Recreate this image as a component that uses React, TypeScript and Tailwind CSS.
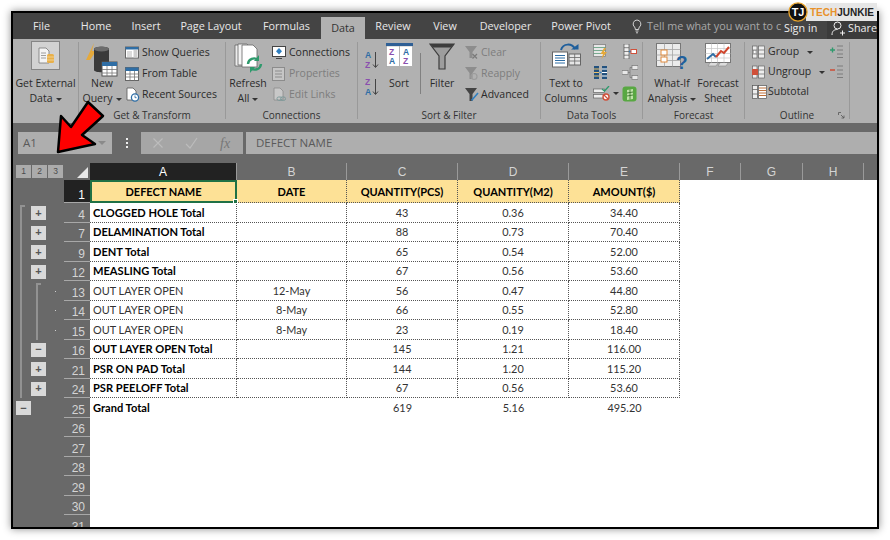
import React from 'react';

const Doc = ({ fill = '#fff' }: { fill?: string }) => (
    <path d="M2 1h6l3 3v9H2z" fill={fill} stroke="#555" strokeWidth="0.8" />
);

const ShowQueries = () => (
    <svg width="14" height="13" viewBox="0 0 14 13"><rect x=".5" y="1" width="13" height="11" fill="#fff" stroke="#666" /><rect x=".5" y="1" width="13" height="2.5" fill="#2f6ea5" /><rect x="8.5" y="4" width="4" height="7.5" fill="#cfcfcf" /><path d="M2 6h5M2 8h5M2 10h5" stroke="#999" strokeWidth=".7" /></svg>
);
const FromTable = () => (
    <svg width="14" height="14" viewBox="0 0 14 14"><rect x=".5" y=".5" width="13" height="13" fill="#fff" stroke="#666" /><rect x=".5" y=".5" width="13" height="3.5" fill="#2f6ea5" /><path d="M.5 7h13M.5 10h13M5 4v9.5M9.5 4v9.5" stroke="#777" strokeWidth=".8" /></svg>
);
const RecentSources = () => (
    <svg width="15" height="15" viewBox="0 0 15 15"><Doc /><circle cx="10" cy="10.5" r="3.6" fill="#fff" stroke="#2f6ea5" strokeWidth="1.3" /><path d="M10 8.5v2.2h1.6" stroke="#2f6ea5" strokeWidth=".9" fill="none" /></svg>
);
const Connections = () => (
    <svg width="14" height="13" viewBox="0 0 14 13"><rect x=".5" y=".5" width="13" height="10" fill="#fff" stroke="#444" /><path d="M7 2l3 3.2-3 3.2-3-3.2z" fill="#2f7fc0" /><path d="M4 12.5h6" stroke="#444" /></svg>
);
const Properties = () => (
    <svg width="13" height="14" viewBox="0 0 13 14"><rect x=".5" y=".5" width="12" height="13" fill="#c6c6c6" stroke="#8c8c8c" /><path d="M3 4h7M3 7h7M3 10h7" stroke="#8c8c8c" /></svg>
);
const EditLinks = () => (
    <svg width="15" height="15" viewBox="0 0 15 15"><path d="M2 1h6l3 3v9H2z" fill="#c8c8c8" stroke="#8c8c8c" strokeWidth=".8" /><rect x="5" y="10" width="5" height="3.4" rx="1.6" fill="none" stroke="#7f9a9a" /><rect x="8.5" y="10" width="5" height="3.4" rx="1.6" fill="none" stroke="#7f9a9a" /></svg>
);
const ClearIcon = () => (
    <svg width="15" height="15" viewBox="0 0 15 15"><path d="M1 1h12L8.5 7v6h-3V7z" fill="#8d8d8d" /><path d="M8.5 9l4.5 4.5M13 9l-4.5 4.5" stroke="#7a7a7a" strokeWidth="1.2" /></svg>
);
const ReapplyIcon = () => (
    <svg width="15" height="15" viewBox="0 0 15 15"><path d="M1 1h12L8.5 7v6h-3V7z" fill="#8d8d8d" /><circle cx="10" cy="10.5" r="3" fill="none" stroke="#9c9c9c" strokeWidth="1.2" /></svg>
);
const AdvancedIcon = () => (
    <svg width="15" height="15" viewBox="0 0 15 15"><path d="M1 1h12L8.5 7v7h-3V7z" fill="#444" /><path d="M7.5 13.5L14 6" stroke="#2f7fc0" strokeWidth="1.6" /></svg>
);

const GetExternalIcon = () => (
    <div className="w-[29px] h-[29px] bg-[#d2d2d2] border border-[#858585] flex items-center justify-center">
        <svg width="18" height="18" viewBox="0 0 18 18"><path d="M2 1h7l3 3v12H2z" fill="#f4f4f4" stroke="#777" strokeWidth=".8" /><path d="M4 6h5M4 8.5h5M4 11h5" stroke="#888" strokeWidth=".8" /><rect x="10" y="7" width="7" height="9" rx="1.5" fill="#e8b04a" /><path d="M10 10h7M10 13h7" stroke="#f5dfaf" strokeWidth=".7" /></svg>
    </div>
);
const NewQueryIcon = () => (
    <svg width="33" height="40" viewBox="0 0 33 40">
        <path d="M8 0L0 17h5l-1 0 6-9H6z" fill="#e5a93b" />
        <path d="M8 6c0-3 15-3 15 0v21c0 3-15 3-15 0z" fill="#3a3a3a" />
        <ellipse cx="15.500" cy="6" rx="7.500" ry="2.500" fill="#6c6c6c" />
        <rect x="16" y="19" width="15" height="14" fill="#fff" stroke="#555" />
        <rect x="16" y="19" width="15" height="4" fill="#2f6ea5" />
        <path d="M16 26.500h15M16 30h15M21 23v10M26 23v10" stroke="#777" strokeWidth=".8" />
    </svg>
);
const RefreshIcon = () => (
    <svg width="29" height="31" viewBox="0 0 29 31">
        <path d="M1 2h9l3 3v18H1z" fill="#ececec" stroke="#666" strokeWidth=".8" />
        <path d="M4 1h9l3 3v18H4z" fill="#f4f4f4" stroke="#666" strokeWidth=".8" />
        <path d="M8 2h11l4 4v18H8z" fill="#fff" stroke="#666" strokeWidth=".8" />
        <path d="M14 21a6 6 0 0 1 10-4M27 21a6 6 0 0 1-10 4" fill="none" stroke="#2f9a6d" strokeWidth="2.400" />
        <path d="M25 12v6h-5zM16 30v-6h5z" fill="#2f9a6d" />
    </svg>
);
const SortAZ = () => (
    <svg width="14" height="20" viewBox="0 0 14 20">
        <text x="0" y="8" fontSize="8.500" fontWeight="700" fill="#2f6ea5" fontFamily="Liberation Sans, sans-serif">A</text>
        <text x="0" y="18" fontSize="8.500" fontWeight="700" fill="#8a4fae" fontFamily="Liberation Sans, sans-serif">Z</text>
        <path d="M10.500 2v15M8 14.500l2.500 3 2.500-3" fill="none" stroke="#444" strokeWidth="1" />
    </svg>
);
const SortZA = () => (
    <svg width="14" height="20" viewBox="0 0 14 20">
        <text x="0" y="8" fontSize="8.500" fontWeight="700" fill="#8a4fae" fontFamily="Liberation Sans, sans-serif">Z</text>
        <text x="0" y="18" fontSize="8.500" fontWeight="700" fill="#2f6ea5" fontFamily="Liberation Sans, sans-serif">A</text>
        <path d="M10.500 2v15M8 14.500l2.500 3 2.500-3" fill="none" stroke="#444" strokeWidth="1" />
    </svg>
);
const SortBig = () => (
    <svg width="27" height="24" viewBox="0 0 27 24">
        <rect x=".5" y="3" width="26" height="20.500" fill="#fff" stroke="#999" strokeWidth=".6" />
        <rect x="0" y="0" width="27" height="3" fill="#2f5f95" />
        <path d="M13.500 3v20" stroke="#b5b5b5" />
        <text x="3" y="12" fontSize="8.500" fontWeight="700" fill="#8a4fae" fontFamily="Liberation Sans, sans-serif">Z</text>
        <text x="3" y="21" fontSize="8.500" fontWeight="700" fill="#2f6ea5" fontFamily="Liberation Sans, sans-serif">A</text>
        <text x="17" y="12" fontSize="8.500" fontWeight="700" fill="#2f6ea5" fontFamily="Liberation Sans, sans-serif">A</text>
        <text x="17" y="21" fontSize="8.500" fontWeight="700" fill="#8a4fae" fontFamily="Liberation Sans, sans-serif">Z</text>
    </svg>
);
const FilterBig = () => (
    <svg width="26" height="27" viewBox="0 0 26 27"><path d="M1 1h24L16 13v13h-6V13z" fill="#9d9d9d" stroke="#3d3d3d" strokeWidth="1.200" /><path d="M1 1h24l-3 3.500H4z" fill="#3d3d3d" /></svg>
);
const TextToColumns = () => (
    <svg width="29" height="25" viewBox="0 0 29 25">
        <rect x=".5" y="9" width="15" height="15" fill="#fff" stroke="#666" />
        <path d="M3 12.500h10M3 15h10M3 17.500h10M3 20h10" stroke="#2f6ea5" strokeWidth="1" />
        <rect x="17" y="11" width="11.500" height="11" fill="#e6e6e6" stroke="#666" />
        <path d="M22.700 11v11M17 14.500h11.500M17 18h11.500" stroke="#666" strokeWidth=".8" />
        <path d="M9 7c2-7 11-7 14-1" fill="none" stroke="#1f5f9c" strokeWidth="2" />
        <path d="M19 6.500h7.500V1z" fill="#1f5f9c" />
    </svg>
);
const FlashFill = () => (
    <svg width="15" height="15" viewBox="0 0 15 15"><rect x=".5" y=".5" width="12" height="12" fill="#e7e7e7" stroke="#777" strokeWidth=".7" /><path d="M.5 3.500h12M.5 6.500h12M.5 9.500h12" stroke="#5c9c7a" strokeWidth=".8" /><path d="M11 4L7.500 10h2.500L8.500 15 14 8h-3l2-4z" fill="#e5a93b" /></svg>
);
const RemoveDup = () => (
    <svg width="15" height="15" viewBox="0 0 15 15"><rect x="1" y="1" width="5" height="13" fill="#23527f" /><path d="M1 4h5M1 7.500h5M1 11h5" stroke="#f0c36a" strokeWidth="1.100" /><rect x="9" y="1" width="5" height="13" fill="#23527f" /><path d="M9 4h5M9 7.500h5M9 11h5" stroke="#fff" strokeWidth="1.100" /><path d="M6.500 7.500h2" stroke="#2f7fc0" strokeWidth="1.500" /></svg>
);
const Validation = () => (
    <svg width="17" height="15" viewBox="0 0 17 15"><rect x=".5" y="3" width="11" height="3.500" fill="#eee" stroke="#666" strokeWidth=".7" /><rect x=".5" y="8.500" width="11" height="3.500" fill="#eee" stroke="#666" strokeWidth=".7" /><path d="M9 3l2.500 2L16 0" fill="none" stroke="#2f9a6d" strokeWidth="1.300" /><circle cx="13" cy="11" r="3" fill="#fff" stroke="#d0503a" strokeWidth="1.400" /><path d="M11 9l4 4" stroke="#d0503a" strokeWidth="1.200" /></svg>
);
const Consolidate = () => (
    <svg width="15" height="15" viewBox="0 0 15 15"><rect x="2" y="0" width="5" height="15" fill="#eee" stroke="#555" strokeWidth=".7" /><path d="M2 3.700h5M2 7.500h5M2 11.200h5" stroke="#555" strokeWidth=".7" /><path d="M7 7.500h2" stroke="#2f7fc0" strokeWidth="1.400" /><rect x="9" y="5.500" width="5.500" height="4" fill="#fff" stroke="#d0503a" /></svg>
);
const Relationships = () => (
    <svg width="16" height="15" viewBox="0 0 16 15"><rect x="0" y="5.500" width="6" height="4" fill="#e8e8e8" stroke="#777" strokeWidth=".7" /><rect x="10" y="0.500" width="6" height="4" fill="#e8e8e8" stroke="#777" strokeWidth=".7" /><rect x="10" y="10.500" width="6" height="4" fill="#e8e8e8" stroke="#777" strokeWidth=".7" /><path d="M6 7.500h2V2.500h2M8 7.500v5h2" fill="none" stroke="#777" strokeWidth=".7" /></svg>
);
const DataModel = () => (
    <svg width="15" height="16" viewBox="0 0 15 16"><rect x=".5" y=".5" width="14" height="15" rx="3" fill="#58a842" /><path d="M5 4l6-1v10l-6 1z" fill="#bfe3a8" /><path d="M5 7l6-1M5 10l6-1M8 3.500v10" stroke="#2e6b22" strokeWidth=".8" /></svg>
);
const WhatIf = () => (
    <svg width="32" height="30" viewBox="0 0 32 30">
        <rect x=".5" y=".5" width="24" height="23" fill="#ececec" stroke="#777" />
        <path d="M.5 6.500h24M.5 12h24M.5 17.500h24M8.500 .5v23M16.500 .5v23" stroke="#a5a5a5" strokeWidth=".8" />
        <rect x="5" y="7" width="6" height="5" fill="#fff" stroke="#e08a3c" />
        <rect x="5" y="14" width="6" height="5" fill="#fff" stroke="#e08a3c" />
        <text x="20" y="26" fontSize="19" fontWeight="700" fill="#1f5f9c" fontFamily="Liberation Sans, sans-serif">?</text>
    </svg>
);
const ForecastIcon = () => (
    <svg width="26" height="24" viewBox="0 0 26 24">
        <rect x=".5" y=".5" width="25" height="19" fill="#fff" stroke="#777" />
        <path d="M.5 5.500h25M.5 10.500h25M.5 15h25M6.500 .5v19M12.500 .5v19M19 .5v19" stroke="#c5c5c5" strokeWidth=".7" />
        <path d="M2 16l6-5 3 3" fill="none" stroke="#2f6ea5" strokeWidth="2" />
        <path d="M11 14l5-6 3 2 5-6" fill="none" stroke="#d0452c" strokeWidth="2" />
        <path d="M5 20l-2 3h8l2-3M15 20l-2 3h8l2-3" fill="#ddd" stroke="#888" strokeWidth=".6" />
    </svg>
);
const GroupIcon = ({ badge }: { badge?: boolean }) => (
    <svg width="13" height="14" viewBox="0 0 13 14">
        <rect x=".5" y="1" width="4.500" height="12" fill="#eee" stroke="#666" strokeWidth=".7" />
        <rect x="6.500" y="1" width="6" height="12" fill="#eee" stroke="#666" strokeWidth=".7" />
        <path d="M.5 5h4.500M.5 9h4.500M6.500 5h6M6.500 9h6" stroke="#666" strokeWidth=".7" />
        {badge ? <rect x="0" y="4" width="6" height="6" fill="#d0503a" /> : <rect x="1.500" y="5.500" width="2.500" height="3" fill="#fff" stroke="#777" strokeWidth=".5" />}
    </svg>
);
const SubtotalIcon = () => (
    <svg width="15" height="14" viewBox="0 0 15 14">
        <rect x=".5" y=".5" width="5" height="13" fill="#eee" stroke="#555" strokeWidth=".7" />
        <rect x="6.500" y=".5" width="8" height="13" fill="#fff" stroke="#555" strokeWidth=".7" />
        <path d="M.5 4.500h5M.5 9h5" stroke="#555" strokeWidth=".7" />
        <path d="M7 3h7M7 5.500h7M7 8h7M7 10.500h7" stroke="#c0703a" strokeWidth="1" />
    </svg>
);
const ShowDetail = ({ minus }: { minus?: boolean }) => (
    <svg width="14" height="13" viewBox="0 0 14 13">
        {minus ? <path d="M0 5h5" stroke="#d0452c" strokeWidth="1.400" /> : <path d="M0 5h5M2.500 2.500v5" stroke="#2f9a6d" strokeWidth="1.400" />}
        <path d="M7 1h6M7 5h6M7 9h6M7 12.500h6" stroke="#7c7c7c" strokeWidth="1" />
    </svg>
);

const Caret = () => <span className="inline-block ml-[3px] align-middle border-x-[3px] border-x-transparent border-t-[3px] border-t-[#333]" />;

const Sep = () => <div className="w-px h-[77px] mt-[3px] bg-[#999] shrink-0" />;

const Group = ({ width, label, children, launcher }: { width: string; label: string; children: React.ReactNode; launcher?: boolean }) => (
    <div className={`${width} shrink-0 flex flex-col`}>
        <div className="h-[68px] flex">{children}</div>
        <div className="h-[16px] flex items-center justify-center text-[10px] text-[#333] relative">
            {label}
            {launcher && (
                <svg className="absolute right-[4px] top-[5px]" width="7" height="7" viewBox="0 0 7 7"><path d="M.5 3V.5H3M3 3l3 3M6 3.500V6H3.500" fill="none" stroke="#555" strokeWidth=".8" /></svg>
            )}
        </div>
    </div>
);

const BigButton = ({ width, icon, lines, caret }: { width: string; icon: React.ReactNode; lines: string[]; caret?: boolean }) => (
    <div className={`${width} shrink-0 flex flex-col items-center`}>
        <div className="h-[37px] pt-[4px] flex justify-center">{icon}</div>
        <div className="text-center leading-[15px] whitespace-nowrap">
            {lines.map((l, i) => (
                <div key={l}>
                    {l}
                    {caret && i === lines.length - 1 && <Caret />}
                </div>
            ))}
        </div>
    </div>
);

const ListCol = ({ items, className }: { items: { icon: React.ReactNode; label: string; off?: boolean }[]; className?: string }) => (
    <div className={`pt-[3px] flex flex-col ${className ?? ''}`}>
        {items.map((it) => (
            <div key={it.label} className={`h-[21px] flex items-center whitespace-nowrap ${it.off ? 'text-[#7d7d7d]' : ''}`}>
                <span className="w-[17px] shrink-0 flex items-center">{it.icon}</span>
                {it.label}
            </div>
        ))}
    </div>
);

const tabs = [
    { label: 'File', w: 'w-[57px]' },
    { label: 'Home', w: 'w-[52px]' },
    { label: 'Insert', w: 'w-[48px]' },
    { label: 'Page Layout', w: 'w-[82px]' },
    { label: 'Formulas', w: 'w-[69px]' },
    { label: 'Data', w: 'w-[44px]', active: true },
    { label: 'Review', w: 'w-[56px]' },
    { label: 'View', w: 'w-[48px]' },
    { label: 'Developer', w: 'w-[73px]' },
    { label: 'Power Pivot', w: 'w-[78px]' },
];

const TabBar = () => (
    <div className="h-[26px] shrink-0 bg-[#444444] flex text-[10.8px] text-[#e8e8e8]">
        {tabs.map((t) => (
            <div
                key={t.label}
                className={`${t.w} shrink-0 flex items-center justify-center ${t.active ? 'bg-[#b1b1b1] text-[#333] mt-[4px]' : ''}`}
            >
                {t.label}
            </div>
        ))}
        <div className="flex items-center w-[165px] pl-[12px] whitespace-nowrap text-[#a8a8a8]">
            <svg className="shrink-0 mr-[5px]" width="10" height="15" viewBox="0 0 10 15"><path d="M5 1a4 4 0 0 0-2.500 7c.6.6.8 1.200.8 2.500h3.400c0-1.300.2-1.900.8-2.500A4 4 0 0 0 5 1zM3.500 12h3M4 13.800h2" fill="none" stroke="#e0e0e0" strokeWidth=".9" /></svg>
            Tell me what you want to c
        </div>
        <div className="w-[44px] shrink-0 flex items-center text-[#f0f0f0] pl-[1px] pt-[5px]">Sign in</div>
        <div className="flex-1 bg-[#3b3b3b] flex items-center pl-[4px] text-[#f0f0f0] pt-[5px] whitespace-nowrap">
            <svg className="mr-[2px] shrink-0" width="15" height="15" viewBox="0 0 15 15"><circle cx="6.500" cy="4.500" r="3.500" fill="none" stroke="#f0f0f0" /><path d="M1 14c0-4 2-5.500 5.500-5.500M11.500 9.500v5M9 12h5" fill="none" stroke="#f0f0f0" /></svg>
            Share
        </div>
    </div>
);

const Ribbon = () => (
    <div className="h-[84px] shrink-0 bg-[#b1b1b1] flex text-[10.5px] text-[#2a2a2a]">
        <Group width="w-[65px]" label="">
            <BigButton width="w-[65px]" icon={<div className="-mt-[2px]"><GetExternalIcon /></div>} lines={['Get External', 'Data']} caret />
        </Group>
        <Sep />
        <Group width="w-[146px]" label="Get & Transform">
            <BigButton width="w-[46px]" icon={<NewQueryIcon />} lines={['New', 'Query']} caret />
            <ListCol
                items={[
                    { icon: <ShowQueries />, label: 'Show Queries' },
                    { icon: <FromTable />, label: 'From Table' },
                    { icon: <RecentSources />, label: 'Recent Sources' },
                ]}
            />
        </Group>
        <Sep />
        <Group width="w-[131px]" label="Connections">
            <BigButton width="w-[44px]" icon={<RefreshIcon />} lines={['Refresh', 'All']} caret />
            <ListCol
                className="ml-[2px]"
                items={[
                    { icon: <Connections />, label: 'Connections' },
                    { icon: <Properties />, label: 'Properties', off: true },
                    { icon: <EditLinks />, label: 'Edit Links', off: true },
                ]}
            />
        </Group>
        <Sep />
        <Group width="w-[182px]" label="Sort & Filter">
            <div className="w-[20px] pl-[7px] shrink-0 pt-[11px] flex flex-col gap-[7px]">
                <SortAZ />
                <SortZA />
            </div>
            <BigButton width="w-[42px]" icon={<SortBig />} lines={['Sort']} />
            <div className="w-px h-[41px] mt-[14px] bg-[#808080] shrink-0" />
            <BigButton width="w-[42px]" icon={<FilterBig />} lines={['Filter']} />
            <ListCol
                className="ml-[1px]"
                items={[
                    { icon: <ClearIcon />, label: 'Clear', off: true },
                    { icon: <ReapplyIcon />, label: 'Reapply', off: true },
                    { icon: <AdvancedIcon />, label: 'Advanced' },
                ]}
            />
        </Group>
        <Sep />
        <Group width="w-[101px]" label="Data Tools">
            <BigButton width="w-[50px]" icon={<TextToColumns />} lines={['Text to', 'Columns']} />
            <div className="pt-[2px] ml-[2px] grid grid-cols-[29px_16px] auto-rows-[21px] items-center">
                <FlashFill />
                <Consolidate />
                <RemoveDup />
                <Relationships />
                <div className="flex items-center">
                    <Validation />
                    <Caret />
                </div>
                <DataModel />
            </div>
        </Group>
        <Sep />
        <Group width="w-[101px]" label="Forecast">
            <div className="w-[6px] shrink-0" />
            <BigButton width="w-[46px]" icon={<WhatIf />} lines={['What-If', 'Analysis']} caret />
            <BigButton width="w-[46px]" icon={<ForecastIcon />} lines={['Forecast', 'Sheet']} />
        </Group>
        <Sep />
        <Group width="w-[104px]" label="Outline" launcher>
            <div className="w-[7px] shrink-0" />
            <div className="pt-[3px] w-[78px] shrink-0 flex flex-col">
                <div className="h-[20px] flex items-center">
                    <span className="w-[16px]"><GroupIcon /></span>Group<span className="ml-[5px]"><Caret /></span>
                </div>
                <div className="h-[20px] flex items-center">
                    <span className="w-[16px]"><GroupIcon badge /></span>Ungroup<span className="ml-[5px]"><Caret /></span>
                </div>
                <div className="h-[20px] flex items-center">
                    <span className="w-[16px]"><SubtotalIcon /></span>Subtotal
                </div>
            </div>
            <div className="pt-[6px] flex flex-col gap-[7px]">
                <ShowDetail />
                <ShowDetail minus />
            </div>
        </Group>
        <Sep />
    </div>
);

const FormulaBar = () => (
    <div className="h-[40px] shrink-0 bg-[#696969] pt-[9px] pb-[9px] pl-[5px] flex text-[11.5px] text-[#5a5a5a]">
        <div className="w-[94px] bg-[#aeaeae] flex items-center justify-between pl-[5px] pr-[6px]">
            A1
            <span className="border-x-[4px] border-x-transparent border-t-[4px] border-t-[#8a8a8a]" />
        </div>
        <div className="w-[29px] flex flex-col items-center justify-center gap-[2px]">
            <span className="w-[2px] h-[2px] bg-[#eee]" />
            <span className="w-[2px] h-[2px] bg-[#eee]" />
            <span className="w-[2px] h-[2px] bg-[#eee]" />
        </div>
        <div className="w-[102px] bg-[#a6a6a6] flex items-center text-[#c0c0c0] pl-[11px]">
            <svg width="12" height="12" viewBox="0 0 12 12"><path d="M1.500 1.500l9 9M10.500 1.500l-9 9" stroke="#bcbcbc" strokeWidth="1.200" /></svg>
            <svg className="ml-[21px]" width="13" height="12" viewBox="0 0 13 12"><path d="M1 7l4 4 7-10" fill="none" stroke="#bcbcbc" strokeWidth="1.200" /></svg>
            <span className="ml-[22px] font-['Liberation_Serif',serif] italic text-[14px] text-[#777]">fx</span>
        </div>
        <div className="flex-1 ml-[3px] bg-[#aeaeae] flex items-center pl-[10px]">DEFECT NAME</div>
    </div>
);

const columns = [
    { label: 'A', w: 'w-[147px]', sel: true },
    { label: 'B', w: 'w-[110px]' },
    { label: 'C', w: 'w-[111px]' },
    { label: 'D', w: 'w-[111px]' },
    { label: 'E', w: 'w-[111px]' },
    { label: 'F', w: 'w-[61px]' },
    { label: 'G', w: 'w-[62px]' },
    { label: 'H', w: 'w-[61px]' },
];

const ColumnHeader = () => (
    <div className="h-[17px] shrink-0 flex font-['Liberation_Sans',sans-serif] text-[12px] text-[#d4d4d4]">
        <div className="w-[51px] shrink-0 flex gap-[1px] pl-[3px] pt-[2px]">
            {['1', '2', '3'].map((n) => (
                <div key={n} className="w-[15px] h-[13px] bg-[#ababab] text-[8.5px] text-[#4c4c4c] flex items-center justify-center">{n}</div>
            ))}
        </div>
        <div className="w-[26px] shrink-0 flex items-end justify-end pb-[2px] pr-[2px]">
            <div className="w-0 h-0 border-l-[11px] border-l-transparent border-b-[11px] border-b-[#e8e8e8]" />
        </div>
        {columns.map((c) => (
            <div
                key={c.label}
                className={`${c.w} shrink-0 flex items-center justify-center pt-[1px] border-r border-[#9a9a9a] ${c.sel ? 'bg-[#222222] text-white' : ''}`}
            >
                {c.label}
            </div>
        ))}
    </div>
);

type OutlineKind = 'none' | 'plus' | 'minus' | 'detail' | 'detailTop' | 'grand' | 'plusTop';

const Box = ({ sign }: { sign: string }) => (
    <div className="w-[15px] h-[14px] bg-[#d9d9d9] text-[#555] font-bold text-[11px] leading-none flex items-center justify-center font-['Liberation_Sans',sans-serif]">{sign}</div>
);

const OutlineCell = ({ kind }: { kind: OutlineKind }) => (
    <div className="w-[51px] shrink-0 flex">
        <div className="w-[18px] shrink-0 flex items-center">
            {kind === 'grand' && <div className="ml-[3px]"><Box sign="−" /></div>}
            {kind === 'plusTop' && <div className="ml-[7px] mt-[2px] h-[calc(100%-2px)] w-[5px] border-l-2 border-t-2 border-[#929292]" />}
            {kind !== 'grand' && kind !== 'plusTop' && kind !== 'none' && <div className="ml-[7px] h-full w-[2px] bg-[#929292]" />}
        </div>
        <div className="w-[15px] shrink-0 flex items-center">
            {(kind === 'plus' || kind === 'plusTop') && <Box sign="+" />}
            {kind === 'minus' && <Box sign="−" />}
            {kind === 'detail' && <div className="ml-[5px] h-full w-[2px] bg-[#929292]" />}
            {kind === 'detailTop' && <div className="ml-[5px] mt-[2px] h-[calc(100%-2px)] w-[5px] border-l-2 border-t-2 border-[#929292]" />}
        </div>
        <div className="flex-1 flex items-center justify-center">
            {(kind === 'detail' || kind === 'detailTop') && <span className="w-[1px] h-[1px] bg-[#cfcfcf]" />}
        </div>
    </div>
);

const RowHead = ({ n, sel }: { n: number; sel?: boolean }) => (
    <div className={`w-[26px] shrink-0 flex items-end justify-end pr-[5px] border-b border-[#a8a8a8] font-['Liberation_Sans',sans-serif] text-[12px] leading-[13px] ${sel ? 'bg-[#222222] text-white' : 'text-[#d4d4d4]'}`}>
        {n}
    </div>
);

const rows: { n: number; h: string; name: string; date?: string; q: string; m: string; a: string; bold?: boolean; outline: OutlineKind }[] = [
    { n: 4, h: 'h-[20px]', name: 'CLOGGED HOLE Total', q: '43', m: '0.36', a: '34.40', bold: true, outline: 'plusTop' },
    { n: 7, h: 'h-[19px]', name: 'DELAMINATION Total', q: '88', m: '0.73', a: '70.40', bold: true, outline: 'plus' },
    { n: 9, h: 'h-[20px]', name: 'DENT Total', q: '65', m: '0.54', a: '52.00', bold: true, outline: 'plus' },
    { n: 12, h: 'h-[19px]', name: 'MEASLING Total', q: '67', m: '0.56', a: '53.60', bold: true, outline: 'plus' },
    { n: 13, h: 'h-[20px]', name: 'OUT LAYER OPEN', date: '12-May', q: '56', m: '0.47', a: '44.80', outline: 'detailTop' },
    { n: 14, h: 'h-[19px]', name: 'OUT LAYER OPEN', date: '8-May', q: '66', m: '0.55', a: '52.80', outline: 'detail' },
    { n: 15, h: 'h-[20px]', name: 'OUT LAYER OPEN', date: '8-May', q: '23', m: '0.19', a: '18.40', outline: 'detail' },
    { n: 16, h: 'h-[19px]', name: 'OUT LAYER OPEN Total', q: '145', m: '1.21', a: '116.00', bold: true, outline: 'minus' },
    { n: 21, h: 'h-[20px]', name: 'PSR ON PAD Total', q: '144', m: '1.20', a: '115.20', bold: true, outline: 'plus' },
    { n: 24, h: 'h-[19px]', name: 'PSR PEELOFF Total', q: '67', m: '0.56', a: '53.60', bold: true, outline: 'plus' },
];

const emptyRows = [
    { n: 26, h: 'h-[19px]' },
    { n: 27, h: 'h-[20px]' },
    { n: 28, h: 'h-[19px]' },
    { n: 29, h: 'h-[20px]' },
    { n: 30, h: 'h-[19px]' },
    { n: 31, h: 'h-[20px]' },
];

const line = 'border-r border-b border-dotted border-[#555]';
const headCell = 'bg-[#fde196] flex items-center justify-center pt-[2px]';

const Sheet = () => (
    <div className="flex-1 flex flex-col min-h-0 font-['Lato',sans-serif] text-[10.9px] text-[#333]">
        {/* header row */}
        <div className="h-[23px] shrink-0 flex">
            <OutlineCell kind="none" />
            <RowHead n={1} sel />
            <div className="flex-1 bg-white flex font-bold text-black text-[11px]">
                <div className="w-[147px] relative bg-[#fde196] border-2 border-[#1f7145] pt-[1px] flex items-center justify-center">
                    DEFECT NAME
                    <span className="absolute -right-[3px] -bottom-[3px] w-[5px] h-[5px] bg-[#1f7145] border border-white" />
                </div>
                <div className={`w-[110px] ${headCell} ${line}`}>DATE</div>
                <div className={`w-[111px] ${headCell} ${line}`}>QUANTITY(PCS)</div>
                <div className={`w-[111px] ${headCell} ${line}`}>QUANTITY(M2)</div>
                <div className={`w-[111px] ${headCell} ${line}`}>AMOUNT($)</div>
            </div>
        </div>
        {rows.map((r) => {
            const pad = r.h === 'h-[20px]' ? 'pt-[1px]' : '';
            return (
                <div key={r.n} className={`${r.h} shrink-0 flex`}>
                    <OutlineCell kind={r.outline} />
                    <RowHead n={r.n} />
                    <div className="flex-1 bg-white flex">
                        <div className={`w-[147px] pl-[3px] flex items-center whitespace-nowrap ${pad} ${line} ${r.bold ? 'font-bold text-black text-[11.1px]' : ''}`}>{r.name}</div>
                        <div className={`w-[110px] flex items-center justify-center ${pad} ${line}`}>{r.date}</div>
                        <div className={`w-[111px] flex items-center justify-center ${pad} ${line}`}>{r.q}</div>
                        <div className={`w-[111px] flex items-center justify-center ${pad} ${line}`}>{r.m}</div>
                        <div className={`w-[111px] flex items-center justify-center ${pad} ${line}`}>{r.a}</div>
                    </div>
                </div>
            );
        })}
        {/* grand total, no cell borders */}
        <div className="h-[20px] shrink-0 flex">
            <OutlineCell kind="grand" />
            <RowHead n={25} />
            <div className="flex-1 bg-white flex">
                <div className="w-[147px] pl-[3px] flex items-center font-bold text-black text-[11.1px]">Grand Total</div>
                <div className="w-[110px]" />
                <div className="w-[111px] flex items-center justify-center">619</div>
                <div className="w-[111px] flex items-center justify-center">5.16</div>
                <div className="w-[111px] flex items-center justify-center">495.20</div>
            </div>
        </div>
        {emptyRows.map((r) => (
            <div key={r.n} className={`${r.h} shrink-0 flex`}>
                <OutlineCell kind="none" />
                <RowHead n={r.n} />
                <div className="flex-1 bg-white" />
            </div>
        ))}
    </div>
);

export default function App() {
    return (
        <div className="relative w-[890px] h-[540px] bg-white pl-[11px] pt-[11px] font-['Open_Sans',sans-serif] overflow-hidden">
            <div className="w-[868px] h-[518px] border-2 border-black bg-[#696969] flex flex-col overflow-hidden shadow-[0_0_8px_rgba(0,0,0,0.45)]">
                <TabBar />
                <Ribbon />
                <FormulaBar />
                <ColumnHeader />
                <Sheet />
            </div>

            {/* red arrow over the name box */}
            <svg className="absolute left-0 top-0" width="120" height="160" viewBox="0 0 120 160">
                <path d="M58 152L61 116L71 127L88 102L103 116L82 135L95 144Z" fill="#fe0000" stroke="#000" strokeWidth="2.500" strokeLinejoin="round" />
            </svg>

            {/* site logo */}
            <div className="absolute left-[788px] top-[2px] flex items-center">
                <svg className="relative z-10" width="20" height="20" viewBox="0 0 22 22">
                    <circle cx="11" cy="11" r="10" fill="#111" stroke="#e8a32a" strokeWidth="1.500" />
                    <text x="11" y="15.500" textAnchor="middle" fontSize="12" fontWeight="700" fill="#fff" fontFamily="Liberation Sans, sans-serif">TJ</text>
                </svg>
                <div className="h-[18px] -ml-[2px] pl-[4px] pr-[3px] bg-[#e6e6e6] flex items-center text-[10px] font-bold font-['Liberation_Sans',sans-serif]">
                    <span className="text-[#e8912a]">TECH</span>
                    <span className="text-[#222]">JUNKIE</span>
                </div>
            </div>
        </div>
    );
}
